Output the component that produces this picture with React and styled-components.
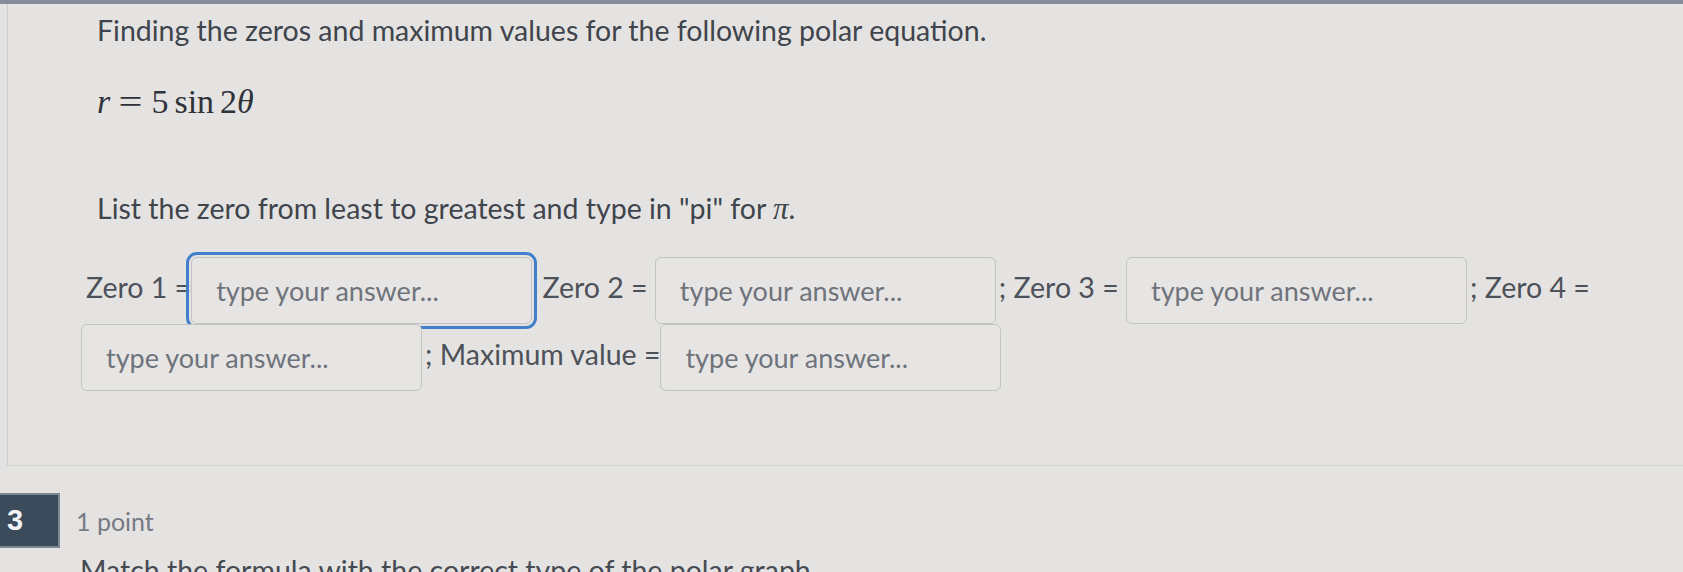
import React from "react";
import styled, { createGlobalStyle } from "styled-components";

const GlobalStyle = createGlobalStyle`
  html, body {
    margin: 0;
    padding: 0;
    background: #e4e3e1;
    overflow: hidden;
  }
  body {
    font-family: Lato, "Noto Sans", sans-serif;
    color: #454951;
  }
`;

const Page = styled.div`
  width: 1683px;
  height: 572px;
  border-top: 4px solid #868d98;
  box-sizing: border-box;
  overflow: hidden;
`;

const QuestionCard = styled.section`
  margin-left: 7px;
  height: 462px;
  box-sizing: border-box;
  border-left: 1px solid #cdcdcd;
  border-bottom: 1px solid #d3d3d2;
  padding: 10px 0 0 89px;
`;

const Title = styled.p`
  margin: 0;
  font-size: 28.5px;
  line-height: 32px;
  color: #40444c;
`;

const Equation = styled.div`
  margin-top: 36px;
  font-family: "Liberation Serif", "DejaVu Serif", serif;
  font-size: 34px;
  line-height: 40px;
  color: #2f3238;
  display: flex;
  align-items: baseline;

  i {
    font-style: italic;
  }
  .rel {
    margin: 0 11px;
    transform: scaleX(1.25);
  }
  .op {
    margin: 0 6px;
  }
`;

const Prompt = styled.p`
  margin: 70px 0 0;
  font-size: 28.5px;
  line-height: 32px;
  color: #40444c;

  i {
    font-family: "Liberation Serif", serif;
    font-size: 31px;
  }
`;

const Answers = styled.div`
  margin: 32px 0 0 -16px;
  width: 1580px;
  text-indent: 5px;
  font-size: 28.5px;
  line-height: 40px;
  color: #4d515a;
`;

const AnswerInput = styled.input`
  display: inline-block;
  vertical-align: middle;
  box-sizing: border-box;
  width: 341px;
  height: 67px;
  margin: 0 3px 0 0;
  padding: 0 0 0 24px;
  border: 1.5px solid #c3c3c2;
  border-radius: 6px;
  background: #e6e5e3;
  font-family: Lato, "Noto Sans", sans-serif;
  font-size: 27px;
  text-indent: 0;
  color: #4d515a;
  outline: ${(p) => (p.$focused ? "3px solid #427fcb" : "none")};
  outline-offset: 2px;

  &::placeholder {
    color: #6f737c;
  }
`;

const NextQuestion = styled.section`
  padding-top: 27px;
`;

const NextHeader = styled.div`
  display: flex;
  align-items: center;
  gap: 16px;
`;

const Number = styled.div`
  width: 60px;
  height: 55px;
  box-sizing: border-box;
  background: #3b4b5c;
  border: 2px solid #7d8791;
  border-left: none;
  color: #f1f3f5;
  font-family: "Liberation Sans", Arial, sans-serif;
  font-size: 29px;
  font-weight: 700;
  display: flex;
  align-items: center;
  padding-left: 7px;
`;

const Points = styled.span`
  font-size: 25px;
  color: #767a84;
`;

const NextText = styled.p`
  margin: 4px 0 0 80px;
  font-size: 28.5px;
  line-height: 36px;
  color: #464a53;
`;

function Answer({ focused }) {
  return <AnswerInput $focused={focused} placeholder="type your answer..." />;
}

export default function App() {
  return (
    <Page>
      <GlobalStyle />
      <QuestionCard>
        <Title>Finding the zeros and maximum values for the following polar equation.</Title>
        <Equation>
          <i>r</i>
          <span className="rel">=</span>
          <span>5</span>
          <span className="op">sin</span>
          <span>2</span>
          <i>θ</i>
        </Equation>
        <Prompt>
          List the zero from least to greatest and type in "pi" for <i>π</i>.
        </Prompt>
        <Answers>
          Zero 1 =<Answer focused /> Zero 2 = <Answer />; Zero 3 = <Answer />; Zero 4 ={" "}
          <Answer />; Maximum value =<Answer />
        </Answers>
      </QuestionCard>
      <NextQuestion>
        <NextHeader>
          <Number>3</Number>
          <Points>1 point</Points>
        </NextHeader>
        <NextText>Match the formula with the correct type of the polar graph.</NextText>
      </NextQuestion>
    </Page>
  );
}
